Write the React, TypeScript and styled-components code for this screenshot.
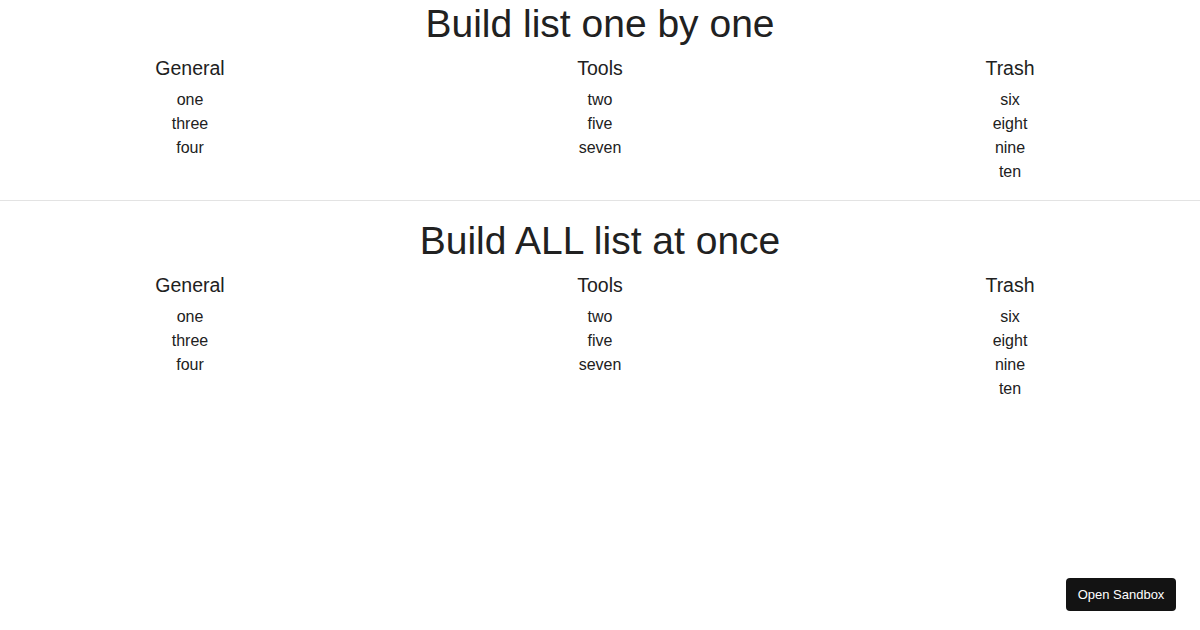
import styled, { createGlobalStyle } from "styled-components";

const LISTS = [
  { name: "General", items: ["one", "three", "four"] },
  { name: "Tools", items: ["two", "five", "seven"] },
  { name: "Trash", items: ["six", "eight", "nine", "ten"] },
];

const Board = ({ title }: { title: string }) => (
  <Section>
    <Title>{title}</Title>
    <Columns>
      {LISTS.map((list) => (
        <Column key={list.name}>
          <ColumnTitle>{list.name}</ColumnTitle>
          {list.items.map((item) => (
            <Item key={item}>{item}</Item>
          ))}
        </Column>
      ))}
    </Columns>
  </Section>
);

const App = () => {
  return (
    <>
      <GlobalStyle />
      <Board title="Build list one by one" />
      <Divider />
      <Board title="Build ALL list at once" />
      <SandboxButton>Open Sandbox</SandboxButton>
    </>
  );
};

const GlobalStyle = createGlobalStyle`
  body {
    margin: 0;
    background: #fff;
    color: #212121;
    font-family: "Liberation Sans", Arial, sans-serif;
  }
`;
const Section = styled.section`
  padding: 0 0 16px;
  & + hr + & {
    padding-top: 16px;
  }
`;
const Title = styled.h1`
  margin: 0 0 8px;
  font-size: 39px;
  font-weight: 400;
  line-height: 48px;
  text-align: center;
`;
const Columns = styled.div`
  display: grid;
  grid-template-columns: repeat(3, 380px);
  column-gap: 30px;
  justify-content: center;
`;
const Column = styled.div`
  display: flex;
  flex-direction: column;
  align-items: center;
`;
const ColumnTitle = styled.h2`
  margin: 0 0 8px;
  font-size: 19.5px;
  font-weight: 400;
  line-height: 24px;
`;
const Item = styled.div`
  font-size: 16px;
  line-height: 24px;
`;
const Divider = styled.hr`
  margin: 0;
  border: none;
  border-top: 1px solid #e3e3e3;
`;
const SandboxButton = styled.button`
  position: fixed;
  right: 24px;
  bottom: 19px;
  width: 110px;
  height: 33px;
  border: none;
  border-radius: 4px;
  background: #131313;
  color: #fff;
  font-family: "Liberation Sans", Arial, sans-serif;
  font-size: 13px;
  cursor: pointer;
`;

export default App;
